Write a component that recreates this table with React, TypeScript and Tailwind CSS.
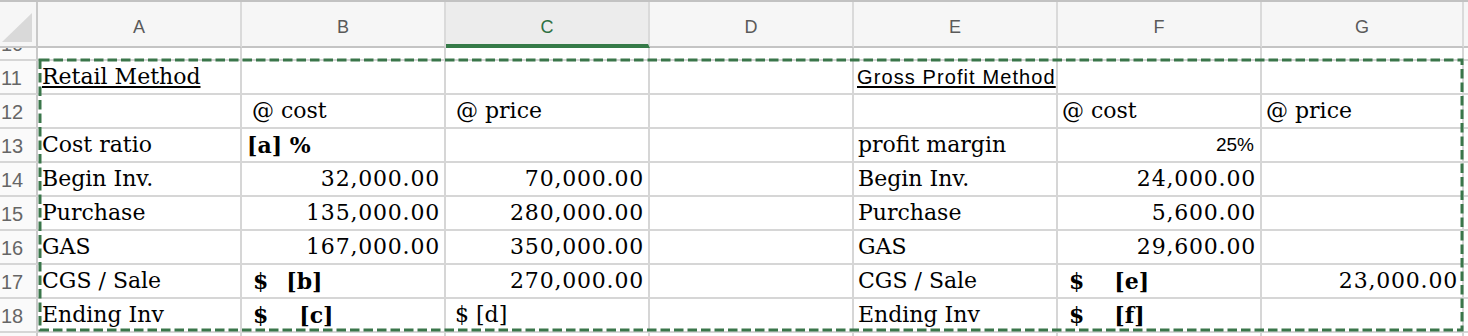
import type { ReactNode } from "react";

const COLS = "grid-cols-[38px_204px_204px_204px_204px_204px_204px_202px_1fr]";
const serif = "font-['DejaVu_Serif',serif] text-[22px] leading-[26px] text-black";
const sans = "font-['Liberation_Sans',Arial,sans-serif]";

const txt = `${serif} pl-[4px]`;
const num = `${serif} justify-end pr-[4px] tracking-[0.8px]`;
const bold = `${serif} font-bold`;

type Cell = { t: ReactNode; k: string } | null;

const LETTERS = ["A", "B", "C", "D", "E", "F", "G"];

const ROWS: { n: string; h: string; cells: Cell[] }[] = [
  { n: "10", h: "h-[13px]", cells: [null, null, null, null, null, null, null] },
  {
    n: "11",
    h: "h-[34px]",
    cells: [
      {
        t: <span className="underline decoration-[2px] underline-offset-[2px]">Retail Method</span>,
        k: txt,
      },
      null,
      null,
      null,
      {
        t: <span className="underline decoration-[2px] underline-offset-[2px]">Gross Profit Method</span>,
        k: `${sans} pl-[3px] pb-[1px] text-[20px] leading-[26px] tracking-[1.1px] text-black`,
      },
      null,
      null,
    ],
  },
  {
    n: "12",
    h: "h-[34px]",
    cells: [
      null,
      { t: "@ cost", k: `${serif} pl-[10px]` },
      { t: "@ price", k: `${serif} pl-[10px]` },
      null,
      null,
      { t: "@ cost", k: txt },
      { t: "@ price", k: txt },
    ],
  },
  {
    n: "13",
    h: "h-[34px]",
    cells: [
      { t: "Cost ratio", k: txt },
      { t: "[a] %", k: `${bold} pl-[5px]` },
      null,
      null,
      { t: "profit margin", k: txt },
      {
        t: "25%",
        k: `${sans} justify-end pr-[6px] pb-[1px] text-[19px] leading-[26px] text-black`,
      },
      null,
    ],
  },
  {
    n: "14",
    h: "h-[34px]",
    cells: [
      { t: "Begin Inv.", k: txt },
      { t: "32,000.00", k: num },
      { t: "70,000.00", k: num },
      null,
      { t: "Begin Inv.", k: txt },
      { t: "24,000.00", k: num },
      null,
    ],
  },
  {
    n: "15",
    h: "h-[34px]",
    cells: [
      { t: "Purchase", k: txt },
      { t: "135,000.00", k: num },
      { t: "280,000.00", k: num },
      null,
      { t: "Purchase", k: txt },
      { t: "5,600.00", k: num },
      null,
    ],
  },
  {
    n: "16",
    h: "h-[34px]",
    cells: [
      { t: "GAS", k: txt },
      { t: "167,000.00", k: num },
      { t: "350,000.00", k: num },
      null,
      { t: "GAS", k: txt },
      { t: "29,600.00", k: num },
      null,
    ],
  },
  {
    n: "17",
    h: "h-[34px]",
    cells: [
      { t: "CGS / Sale", k: txt },
      {
        t: (
          <>
            <span>$</span>
            <span className="ml-[18px]">[b]</span>
          </>
        ),
        k: `${bold} pl-[11px]`,
      },
      { t: "270,000.00", k: num },
      null,
      { t: "CGS / Sale", k: txt },
      {
        t: (
          <>
            <span>$</span>
            <span className="ml-[30px]">[e]</span>
          </>
        ),
        k: `${bold} pl-[11px]`,
      },
      { t: "23,000.00", k: num },
    ],
  },
  {
    n: "18",
    h: "h-[34px]",
    cells: [
      { t: "Ending Inv", k: txt },
      {
        t: (
          <>
            <span>$</span>
            <span className="ml-[31px]">[c]</span>
          </>
        ),
        k: `${bold} pl-[11px]`,
      },
      { t: "$ [d]", k: `${serif} pl-[9px]` },
      null,
      { t: "Ending Inv", k: txt },
      {
        t: (
          <>
            <span>$</span>
            <span className="ml-[30px]">[f]</span>
          </>
        ),
        k: `${bold} pl-[11px]`,
      },
      null,
    ],
  },
  { n: "", h: "h-[34px]", cells: [null, null, null, null, null, null, null] },
];

function HeaderRow() {
  return (
    <div className={`grid h-[46px] ${COLS} bg-[#f6f6f6]`}>
      <div className="flex items-end justify-end border-r-2 border-b-2 border-[#c9c9c9] pr-[4px] pb-[4px]">
        <svg width="30" height="29" viewBox="0 0 30 29">
          <polygon points="30,0 30,29 0,29" fill="#d9d9d9" />
        </svg>
      </div>
      {LETTERS.map((l) =>
        l === "C" ? (
          <div
            key={l}
            className={`flex items-end justify-center border-r-2 border-b-4 border-r-[#dadada] border-b-[#357a48] bg-[#ececec] pb-[7px] ${sans} text-[18px] leading-[20px] text-[#2f7042]`}
          >
            {l}
          </div>
        ) : (
          <div
            key={l}
            className={`flex items-end justify-center border-r-2 border-b-2 border-r-[#dadada] border-b-[#c4c4c4] pb-[9px] ${sans} text-[18px] leading-[20px] text-[#5a5a5a]`}
          >
            {l}
          </div>
        )
      )}
      <div className="border-b-2 border-[#c4c4c4]" />
    </div>
  );
}

export default function App() {
  return (
    <div className="relative h-[336px] w-[1468px] overflow-hidden bg-white">
      <div className="h-[2px] bg-[#c2c2c2]" />
      <HeaderRow />
      {ROWS.map((row, r) => (
        <div key={r} className={`grid ${row.h} ${COLS}`}>
          <div
            className={`flex items-end overflow-hidden border-r-2 border-b-2 border-r-[#c9c9c9] border-b-[#d6d6d6] bg-[#fafafa] pl-[1px] pb-[2px] ${sans} text-[20px] leading-[26px] text-[#666666]`}
          >
            {row.n}
          </div>
          {row.cells.map((c, i) => (
            <div
              key={i}
              className={`flex items-end overflow-hidden whitespace-nowrap border-r-2 border-b-2 border-[#d6d6d6] pb-[3px] ${c ? c.k : ""}`}
            >
              {c ? c.t : null}
            </div>
          ))}
          <div className="border-b-2 border-[#d6d6d6]" />
        </div>
      ))}

      {/* copy marquee around A11:G18 */}
      <svg
        className="pointer-events-none absolute left-0 top-0"
        width="1468"
        height="336"
        viewBox="0 0 1468 336"
      >
        <rect
          x="40"
          y="60"
          width="1422"
          height="270"
          fill="none"
          stroke="#3a764a"
          strokeWidth="3"
          strokeDasharray="9.5 4"
        />
      </svg>
    </div>
  );
}
